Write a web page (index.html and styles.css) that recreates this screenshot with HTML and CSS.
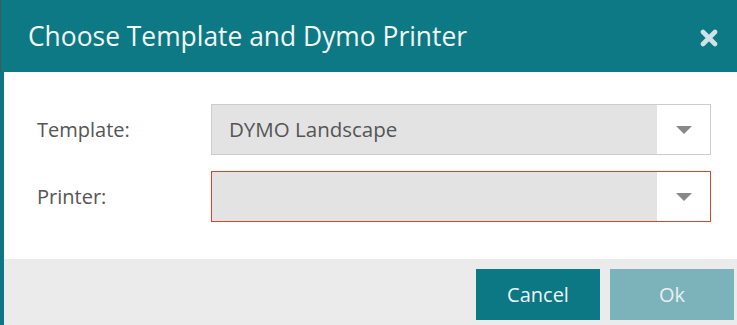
FILE: index.html
```html
<!DOCTYPE html>
<html>
<head>
<meta charset="utf-8">
<link rel="stylesheet" href="styles.css">
</head>
<body>
<div class="dialog">
  <div class="header">
    <h1 class="title">Choose Template and Dymo Printer</h1>
    <button class="close" aria-label="Close">
      <svg width="18" height="18" viewBox="0 0 18 18"><path d="M3 3 L15 15 M15 3 L3 15" stroke="#cfe3e6" stroke-width="4.6" stroke-linecap="round"/></svg>
    </button>
  </div>
  <div class="body">
    <div class="row">
      <label class="label">Template:</label>
      <div class="select">
        <span class="value">DYMO Landscape</span>
        <span class="arrow"><span class="tri"></span></span>
      </div>
    </div>
    <div class="row">
      <label class="label">Printer:</label>
      <div class="select invalid">
        <span class="value"></span>
        <span class="arrow"><span class="tri"></span></span>
      </div>
    </div>
  </div>
  <div class="footer">
    <button class="btn cancel">Cancel</button>
    <button class="btn ok">Ok</button>
  </div>
</div>
</body>
</html>
```
FILE: styles.css
```css
html, body {
  margin: 0;
  padding: 0;
  background: #fff;
}
body {
  font-family: "Open Sans", "Noto Sans", sans-serif;
  width: 737px;
  height: 325px;
  overflow: hidden;
}
.dialog {
  display: flex;
  flex-direction: column;
  height: 325px;
  border-left: 4px solid #0c7682;
  box-sizing: border-box;
}
.header {
  height: 72px;
  background: #0c7985;
  display: flex;
  align-items: center;
  justify-content: space-between;
  margin-left: -4px;
  padding: 0 19px 0 27px;
  border-left: 1px solid #44585b;
  box-sizing: border-box;
}
.title {
  margin: 0;
  font-weight: 400;
  font-size: 26.4px;
  color: #f2f7f7;
  letter-spacing: 0;
}
.close {
  background: none;
  border: 0;
  padding: 0;
  width: 18px;
  height: 18px;
  display: flex;
  margin-top: 4px;
}
.body {
  padding: 32px 26px 37px 33px;
  display: flex;
  flex-direction: column;
  gap: 16px;
}
.row {
  display: flex;
  align-items: center;
}
.label {
  width: 174px;
  font-size: 20px;
  color: #555;
}
.select {
  flex: 1;
  height: 51px;
  box-sizing: border-box;
  border: 1px solid #cccccc;
  background: #e3e3e3;
  display: flex;
}
.select.invalid {
  border-color: #d4472b;
}
.value {
  flex: 1;
  padding-left: 17px;
  font-size: 20.5px;
  color: #555;
  line-height: 49px;
}
.arrow {
  width: 53px;
  background: #fff;
  display: flex;
  align-items: center;
  justify-content: center;
}
.tri {
  width: 0;
  height: 0;
  border-left: 8px solid transparent;
  border-right: 8px solid transparent;
  border-top: 8px solid #888;
}
.footer {
  flex: 1;
  background: #ebebeb;
  display: flex;
  justify-content: flex-end;
  align-items: flex-start;
  gap: 10px;
  padding: 10px 3px 0 0;
}
.btn {
  width: 124px;
  height: 51px;
  border: 0;
  font-family: "Open Sans", "Noto Sans", sans-serif;
  font-size: 20px;
  color: #eef5f6;
  cursor: pointer;
}
.cancel {
  background: #0b7884;
}
.ok {
  background: #7cb3ba;
  color: #e8f0f1;
}
```
